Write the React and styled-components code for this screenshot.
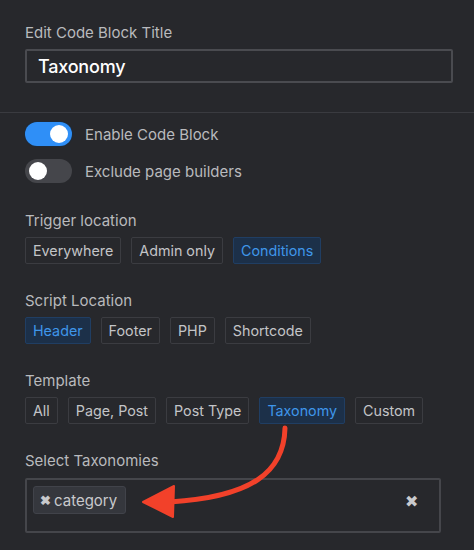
import styled, { createGlobalStyle } from 'styled-components'

const GlobalStyle = createGlobalStyle`
    body {
        margin: 0;
        background: #27282c;
        font-family: Inter, "Noto Sans", sans-serif;
        -webkit-font-smoothing: antialiased;
    }
`

const groups = [
    { label: 'Trigger location', options: ['Everywhere', 'Admin only', 'Conditions'], active: 'Conditions' },
    { label: 'Script Location', options: ['Header', 'Footer', 'PHP', 'Shortcode'], active: 'Header' },
    { label: 'Template', options: ['All', 'Page, Post', 'Post Type', 'Taxonomy', 'Custom'], active: 'Taxonomy' },
]

export default function App() {
    return (
        <Page>
            <GlobalStyle />
            <TitleSection>
                <Label>Edit Code Block Title</Label>
                <TitleInput>Taxonomy</TitleInput>
            </TitleSection>
            <Body>
                <Toggles>
                    <ToggleRow>
                        <Toggle on />
                        <ToggleText>Enable Code Block</ToggleText>
                    </ToggleRow>
                    <ToggleRow>
                        <Toggle />
                        <ToggleText>Exclude page builders</ToggleText>
                    </ToggleRow>
                </Toggles>
                {groups.map(group => (
                    <Group key={group.label}>
                        <Label>{group.label}</Label>
                        <Options>
                            {group.options.map(option => (
                                <Option key={option} active={option === group.active}>{option}</Option>
                            ))}
                        </Options>
                    </Group>
                ))}
                <Group>
                    <Label>Select Taxonomies</Label>
                    <MultiSelect>
                        <Tag><TagRemove>✖</TagRemove>category</Tag>
                        <ClearAll>✖</ClearAll>
                    </MultiSelect>
                </Group>
            </Body>
            <Arrow viewBox="0 0 474 550" width="474" height="550">
                <path d="M285 428 C 284 472, 252 497, 170 502" fill="none" stroke="#f2412a" strokeWidth="5" strokeLinecap="round" />
                <path d="M143 502 L174 486 L173 517 Z" fill="#f2412a" stroke="#f2412a" strokeWidth="2" strokeLinejoin="round" />
            </Arrow>
        </Page>
    )
}

const Page = styled.div`
    position: relative;
    width: 474px;
    height: 550px;
    overflow: hidden;
    background: #27282c;
`
const TitleSection = styled.div`
    padding: 24px 21px 29px 25px;
    border-bottom: 1px solid #3a3b40;
    display: flex;
    flex-direction: column;
    gap: 7px;
`
const Label = styled.div`
    font-size: 15px;
    line-height: 18px;
    color: #b9babd;
`
const TitleInput = styled.div`
    box-sizing: border-box;
    height: 34px;
    border: 2px solid #4a4b50;
    border-radius: 2px;
    padding: 0 11px;
    display: flex;
    align-items: center;
    font-size: 18px;
    font-weight: 500;
    letter-spacing: -0.2px;
    color: #ffffff;
`
const Body = styled.div`
    padding: 9px 21px 0 25px;
`
const Toggles = styled.div`
    display: flex;
    flex-direction: column;
    gap: 13px;
    margin-bottom: 29px;
`
const ToggleRow = styled.div`
    display: flex;
    align-items: center;
    gap: 13px;
`
const Toggle = styled.div`
    box-sizing: border-box;
    position: relative;
    width: 47px;
    height: 24px;
    border-radius: 12px;
    background: ${props => props.on ? '#2f8ff7' : '#45464b'};
    box-shadow: ${props => props.on ? '0 0 0 1px #1f2a38' : 'none'};

    &::after {
        content: '';
        position: absolute;
        top: 3px;
        left: ${props => props.on ? '25px' : '4px'};
        width: 18px;
        height: 18px;
        border-radius: 50%;
        background: #ffffff;
    }
`
const ToggleText = styled.span`
    font-size: 15px;
    color: #b9babd;
`
const Group = styled.div`
    display: flex;
    flex-direction: column;
    gap: 7px;
    margin-bottom: 28px;

    &:last-child {
        gap: 8px;
    }
`
const Options = styled.div`
    display: flex;
    gap: 10px;
`
const Option = styled.div`
    box-sizing: border-box;
    height: 27px;
    padding: 0 7px;
    display: flex;
    align-items: center;
    font-size: 14.3px;
    border: 1px solid ${props => props.active ? '#203e63' : '#3b3c41'};
    background: ${props => props.active ? '#1c3049' : 'transparent'};
    color: ${props => props.active ? '#3f96ea' : '#c3c4c7'};
    border-radius: 2px;
`
const MultiSelect = styled.div`
    box-sizing: border-box;
    width: 416px;
    height: 55px;
    border: 2px solid #45464b;
    border-radius: 2px;
    padding: 6px 21px 0 6px;
    display: flex;
    align-items: flex-start;
    justify-content: space-between;
`
const Tag = styled.div`
    box-sizing: border-box;
    height: 28px;
    padding: 0 8px 0 6px;
    display: flex;
    align-items: center;
    gap: 3px;
    background: #35373d;
    border: 1px solid #41434a;
    border-radius: 3px;
    font-size: 15px;
    color: #c8c9cc;
`
const TagRemove = styled.span`
    font-size: 13px;
    font-weight: 700;
    color: #c8c9cc;
`
const ClearAll = styled.span`
    margin-top: 5px;
    font-size: 16px;
    color: #c9cacd;
`
const Arrow = styled.svg`
    position: absolute;
    top: 0;
    left: 0;
    pointer-events: none;
`
